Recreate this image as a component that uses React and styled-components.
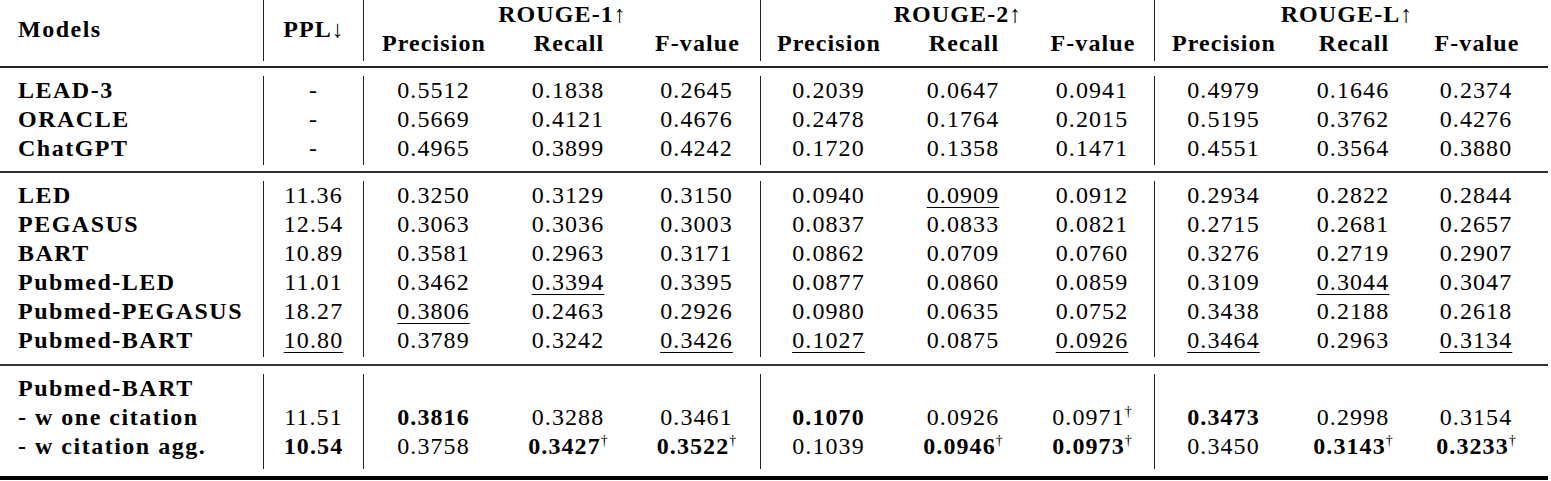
import React from "react";
import styled, { createGlobalStyle } from "styled-components";

const GlobalStyle = createGlobalStyle`
  body {
    margin: 0;
    background: #fff;
  }
`;

// column widths: Models, PPL, then 3 groups x (Precision, Recall, F-value)
const COLS = [263, 100, 140, 130, 127, 136, 134, 124, 138, 122, 124];
const RULED = [false, true, true, false, false, true, false, false, true, false, false];
const GROUPS = [
  { title: "ROUGE-1", cols: COLS.slice(2, 5) },
  { title: "ROUGE-2", cols: COLS.slice(5, 8) },
  { title: "ROUGE-L", cols: COLS.slice(8, 11) },
];
const px = (list) => list.map((w) => w + "px").join(" ");

const GROUP_A = [
  ["LEAD-3", "-", "0.5512", "0.1838", "0.2645", "0.2039", "0.0647", "0.0941", "0.4979", "0.1646", "0.2374"],
  ["ORACLE", "-", "0.5669", "0.4121", "0.4676", "0.2478", "0.1764", "0.2015", "0.5195", "0.3762", "0.4276"],
  ["ChatGPT", "-", "0.4965", "0.3899", "0.4242", "0.1720", "0.1358", "0.1471", "0.4551", "0.3564", "0.3880"],
];

const GROUP_B = [
  ["LED", "11.36", "0.3250", "0.3129", "0.3150", "0.0940", "_0.0909", "0.0912", "0.2934", "0.2822", "0.2844"],
  ["PEGASUS", "12.54", "0.3063", "0.3036", "0.3003", "0.0837", "0.0833", "0.0821", "0.2715", "0.2681", "0.2657"],
  ["BART", "10.89", "0.3581", "0.2963", "0.3171", "0.0862", "0.0709", "0.0760", "0.3276", "0.2719", "0.2907"],
  ["Pubmed-LED", "11.01", "0.3462", "_0.3394", "0.3395", "0.0877", "0.0860", "0.0859", "0.3109", "_0.3044", "0.3047"],
  ["Pubmed-PEGASUS", "18.27", "_0.3806", "0.2463", "0.2926", "0.0980", "0.0635", "0.0752", "0.3438", "0.2188", "0.2618"],
  ["Pubmed-BART", "_10.80", "0.3789", "0.3242", "_0.3426", "_0.1027", "0.0875", "_0.0926", "_0.3464", "0.2963", "_0.3134"],
];

const GROUP_C = [
  ["Pubmed-BART", "", "", "", "", "", "", "", "", "", ""],
  ["- w one citation", "11.51", "*0.3816", "0.3288", "0.3461", "*0.1070", "0.0926", "0.0971†", "*0.3473", "0.2998", "0.3154"],
  ["- w citation agg.", "*10.54", "0.3758", "*0.3427†", "*0.3522†", "0.1039", "*0.0946†", "*0.0973†", "0.3450", "*0.3143†", "*0.3233†"],
];

const Table = styled.div`
  width: 1548px;
  font-family: "Liberation Serif", "Times New Roman", serif;
  font-size: 24px;
  letter-spacing: 1.1px;
  color: #000;
`;

const HeaderRow = styled.div`
  display: grid;
  grid-template-columns: ${COLS[0]}px ${COLS[1]}px ${GROUPS.map((g) => g.cols.reduce((a, b) => a + b, 0) + "px").join(" ")};
  padding-right: 10px;
  font-weight: 700;
`;

const HeadCell = styled.div`
  display: flex;
  align-items: center;
  justify-content: ${(p) => (p.$left ? "flex-start" : "center")};
  padding-left: ${(p) => (p.$left ? "18px" : "0")};
  padding-bottom: 3px;
  border-left: ${(p) => (p.$ruled ? "1px solid #222" : "none")};
  letter-spacing: ${(p) => (p.$left ? "1.5px" : "inherit")};
  line-height: 29px;
  white-space: nowrap;
`;

const HeadGroup = styled.div`
  display: flex;
  flex-direction: column;
  padding-bottom: 3px;
  border-left: 1px solid #222;
`;

const GroupTitle = styled.div`
  text-align: center;
  line-height: 29px;
  white-space: nowrap;
`;

const SubRow = styled.div`
  display: grid;
  grid-template-columns: ${(p) => p.$cols};
`;

const SubHead = styled.div`
  text-align: center;
  line-height: 29px;
  white-space: nowrap;
`;

const Arrow = styled.span`
  font-weight: 400;
  letter-spacing: 0;
`;

const Section = styled.div`
  display: grid;
  grid-template-columns: ${px(COLS)};
  padding-right: 10px;
`;

const Column = styled.div`
  display: flex;
  flex-direction: column;
  padding-bottom: ${(p) => p.$pb}px;
  border-left: ${(p) => (p.$ruled ? "1px solid #222" : "none")};
  text-align: ${(p) => (p.$left ? "left" : "center")};
  padding-left: ${(p) => (p.$left ? "18px" : "0")};
  font-weight: ${(p) => (p.$left ? 700 : 400)};
  letter-spacing: ${(p) => (p.$left ? "1.5px" : "inherit")};
`;

const Cell = styled.div`
  height: 29px;
  line-height: 29px;
  white-space: nowrap;
`;

const Num = styled.span`
  font-weight: ${(p) => (p.$bold ? 700 : "inherit")};
  text-decoration: ${(p) => (p.$under ? "underline" : "none")};
  text-decoration-thickness: 1px;
  text-underline-offset: 4px;
`;

const Dagger = styled.span`
  font-size: 14px;
  font-weight: 400;
  letter-spacing: 0;
  vertical-align: 9px;
  line-height: 0;
`;

const Rule = styled.div`
  height: ${(p) => p.$h}px;
  background: ${(p) => p.$color};
  margin: ${(p) => p.$mt}px 0 ${(p) => p.$mb}px;
`;

function Value({ v }) {
  if (!v) return null;
  let text = v;
  let bold = false;
  let under = false;
  let dag = false;
  if (text.startsWith("*")) {
    bold = true;
    text = text.slice(1);
  }
  if (text.startsWith("_")) {
    under = true;
    text = text.slice(1);
  }
  if (text.endsWith("†")) {
    dag = true;
    text = text.slice(0, -1);
  }
  return (
    <>
      <Num $bold={bold} $under={under}>{text}</Num>
      {dag && <Dagger>†</Dagger>}
    </>
  );
}

function Block({ rows, pb }) {
  return (
    <Section>
      {COLS.map((_, ci) => (
        <Column key={ci} $ruled={RULED[ci]} $left={ci === 0} $pb={pb}>
          {rows.map((row, ri) => (
            <Cell key={ri}>
              {ci === 0 ? row[0] : <Value v={row[ci]} />}
            </Cell>
          ))}
        </Column>
      ))}
    </Section>
  );
}

function Header() {
  return (
    <HeaderRow>
      <HeadCell $left>Models</HeadCell>
      <HeadCell $ruled>
        PPL<Arrow>↓</Arrow>
      </HeadCell>
      {GROUPS.map((g) => (
        <HeadGroup key={g.title}>
          <GroupTitle>
            {g.title}
            <Arrow>↑</Arrow>
          </GroupTitle>
          <SubRow $cols={px(g.cols)}>
            <SubHead>Precision</SubHead>
            <SubHead>Recall</SubHead>
            <SubHead>F-value</SubHead>
          </SubRow>
        </HeadGroup>
      ))}
    </HeaderRow>
  );
}

export default function App() {
  return (
    <>
      <GlobalStyle />
      <Table>
        <Header />
        <Rule $h={2} $color="#222" $mt={5} $mb={8} />
        <Block rows={GROUP_A} pb={2} />
        <Rule $h={2} $color="#333" $mt={6} $mb={8} />
        <Block rows={GROUP_B} pb={2} />
        <Rule $h={2} $color="#333" $mt={7} $mb={8} />
        <Block rows={GROUP_C} pb={8} />
        <Rule $h={4} $color="#000" $mt={7} $mb={0} />
      </Table>
    </>
  );
}
